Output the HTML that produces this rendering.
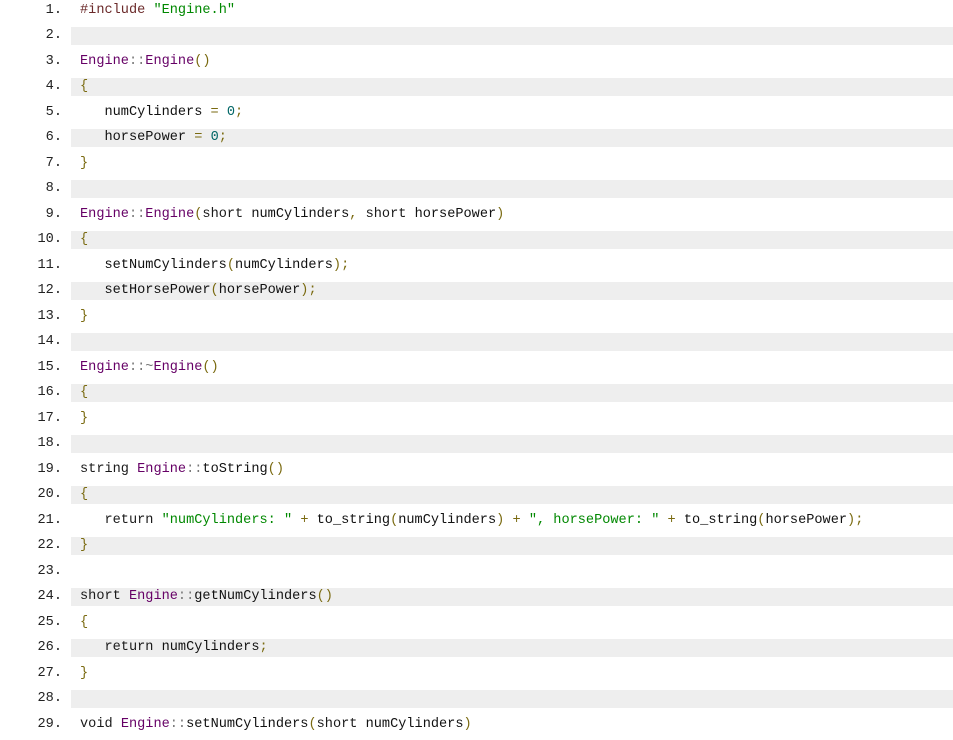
<!DOCTYPE html>
<html><head><meta charset="utf-8"><style>
body{margin:0;background:#fff;width:953px;height:740px;overflow:hidden;font-family:"Liberation Mono",monospace;font-size:13.6px}
.c{margin-top:-2.5px}
.r{height:25.5px;position:relative}
.n{position:absolute;right:891px;top:0;line-height:25.5px;color:#222;font-size:13.6px}
.b{position:absolute;left:71px;right:0;top:3.75px;height:18px}
.r:nth-child(even) .b{background:#eee}
.t{position:absolute;left:80px;top:0;line-height:25.5px;white-space:pre;color:#111}
.k{color:#1a1a1a}.y{color:#606}.p{color:#7a6a10}.l{color:#066}.s{color:#080}.m{color:#6b2a2a}.q{color:#777}
</style></head><body><div class="c">
<div class="r"><span class="n">1.</span><div class="b"></div><span class="t"><span class="m">#include</span> <span class="s">"Engine.h"</span></span></div>
<div class="r"><span class="n">2.</span><div class="b"></div><span class="t"></span></div>
<div class="r"><span class="n">3.</span><div class="b"></div><span class="t"><span class="y">Engine</span><span class="q">::</span><span class="y">Engine</span><span class="p">()</span></span></div>
<div class="r"><span class="n">4.</span><div class="b"></div><span class="t"><span class="p">{</span></span></div>
<div class="r"><span class="n">5.</span><div class="b"></div><span class="t">   numCylinders <span class="p">=</span> <span class="l">0</span><span class="p">;</span></span></div>
<div class="r"><span class="n">6.</span><div class="b"></div><span class="t">   horsePower <span class="p">=</span> <span class="l">0</span><span class="p">;</span></span></div>
<div class="r"><span class="n">7.</span><div class="b"></div><span class="t"><span class="p">}</span></span></div>
<div class="r"><span class="n">8.</span><div class="b"></div><span class="t"></span></div>
<div class="r"><span class="n">9.</span><div class="b"></div><span class="t"><span class="y">Engine</span><span class="q">::</span><span class="y">Engine</span><span class="p">(</span><span class="k">short</span> numCylinders<span class="p">,</span> <span class="k">short</span> horsePower<span class="p">)</span></span></div>
<div class="r"><span class="n">10.</span><div class="b"></div><span class="t"><span class="p">{</span></span></div>
<div class="r"><span class="n">11.</span><div class="b"></div><span class="t">   setNumCylinders<span class="p">(</span>numCylinders<span class="p">);</span></span></div>
<div class="r"><span class="n">12.</span><div class="b"></div><span class="t">   setHorsePower<span class="p">(</span>horsePower<span class="p">);</span></span></div>
<div class="r"><span class="n">13.</span><div class="b"></div><span class="t"><span class="p">}</span></span></div>
<div class="r"><span class="n">14.</span><div class="b"></div><span class="t"></span></div>
<div class="r"><span class="n">15.</span><div class="b"></div><span class="t"><span class="y">Engine</span><span class="q">::~</span><span class="y">Engine</span><span class="p">()</span></span></div>
<div class="r"><span class="n">16.</span><div class="b"></div><span class="t"><span class="p">{</span></span></div>
<div class="r"><span class="n">17.</span><div class="b"></div><span class="t"><span class="p">}</span></span></div>
<div class="r"><span class="n">18.</span><div class="b"></div><span class="t"></span></div>
<div class="r"><span class="n">19.</span><div class="b"></div><span class="t"><span class="k">string</span> <span class="y">Engine</span><span class="q">::</span>toString<span class="p">()</span></span></div>
<div class="r"><span class="n">20.</span><div class="b"></div><span class="t"><span class="p">{</span></span></div>
<div class="r"><span class="n">21.</span><div class="b"></div><span class="t">   <span class="k">return</span> <span class="s">"numCylinders: "</span> <span class="p">+</span> to_string<span class="p">(</span>numCylinders<span class="p">)</span> <span class="p">+</span> <span class="s">", horsePower: "</span> <span class="p">+</span> to_string<span class="p">(</span>horsePower<span class="p">);</span></span></div>
<div class="r"><span class="n">22.</span><div class="b"></div><span class="t"><span class="p">}</span></span></div>
<div class="r"><span class="n">23.</span><div class="b"></div><span class="t"></span></div>
<div class="r"><span class="n">24.</span><div class="b"></div><span class="t"><span class="k">short</span> <span class="y">Engine</span><span class="q">::</span>getNumCylinders<span class="p">()</span></span></div>
<div class="r"><span class="n">25.</span><div class="b"></div><span class="t"><span class="p">{</span></span></div>
<div class="r"><span class="n">26.</span><div class="b"></div><span class="t">   <span class="k">return</span> numCylinders<span class="p">;</span></span></div>
<div class="r"><span class="n">27.</span><div class="b"></div><span class="t"><span class="p">}</span></span></div>
<div class="r"><span class="n">28.</span><div class="b"></div><span class="t"></span></div>
<div class="r"><span class="n">29.</span><div class="b"></div><span class="t"><span class="k">void</span> <span class="y">Engine</span><span class="q">::</span>setNumCylinders<span class="p">(</span><span class="k">short</span> numCylinders<span class="p">)</span></span></div>
</div></body></html>
